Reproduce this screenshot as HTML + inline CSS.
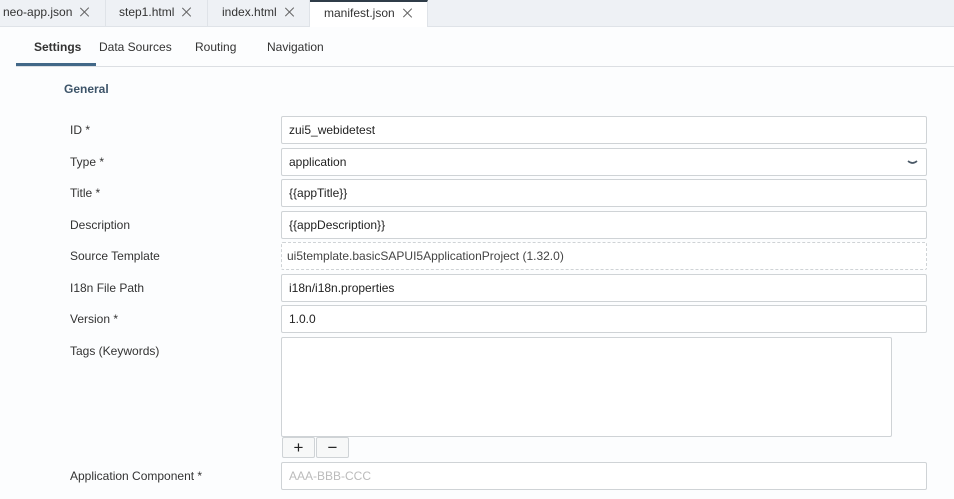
<!DOCTYPE html>
<html><head><meta charset="utf-8"><style>
*{box-sizing:border-box;margin:0;padding:0}
body{width:954px;height:499px;overflow:hidden;background:#fcfdfe;font-family:"Liberation Sans",Arial,sans-serif;font-size:12px;color:#333;position:relative}
.tabbar{position:absolute;left:0;top:0;width:954px;height:27px;background:#eef1f5;border-bottom:1px solid #dfe3e8}
.tab{position:absolute;top:0;height:26px;line-height:25px;color:#333;font-size:12px;border-right:1px solid #dfe3e8}
.tab .x{display:inline-block;width:10px;height:10px;position:relative;margin-left:8px;top:1px}
.x:before,.x:after{content:"";position:absolute;left:4px;top:-1px;width:1.3px;height:12px;background:#666;transform:rotate(45deg)}
.x:after{transform:rotate(-45deg)}
.tab.active{background:#fff;border-top:2px solid #2f3c48;height:27px;line-height:23px}
.sub{position:absolute;top:40px;font-size:12px;color:#333}
.line{position:absolute;left:16px;top:66px;width:938px;height:1px;background:#dcdfe3}
.ul{position:absolute;left:16px;top:63px;width:80px;height:3px;background:#426888}
.h{position:absolute;left:64px;top:82px;font-weight:bold;color:#3d5469;font-size:12px}
.lab{position:absolute;left:70px;font-size:12px;color:#333}
.in{position:absolute;left:281px;width:646px;height:28px;background:#fff;border:1px solid #cfd3d6;border-radius:2px;padding-left:7px;line-height:26px;font-size:12px;color:#222}
.btn{position:absolute;top:437px;width:33px;height:21px;background:#f7f8f8;border:1px solid #cfd3d6;border-radius:2px;text-align:center;line-height:19px;font-size:17px;color:#222}
</style></head><body>
<div class="tabbar">
<div class="tab" style="left:0;width:106px;padding-left:3px">neo-app.json<span class="x"></span></div>
<div class="tab" style="left:106px;width:102px;padding-left:13px">step1.html<span class="x"></span></div>
<div class="tab" style="left:208px;width:102px;padding-left:14px">index.html<span class="x"></span></div>
<div class="tab active" style="left:310px;width:118px;padding-left:14px">manifest.json<span class="x"></span></div>
</div>
<div class="sub" style="left:34px;font-weight:bold">Settings</div>
<div class="sub" style="left:99px">Data Sources</div>
<div class="sub" style="left:195px">Routing</div>
<div class="sub" style="left:267px">Navigation</div>
<div class="line"></div><div class="ul"></div>
<div class="h">General</div>

<div class="lab" style="top:123px">ID *</div>
<div class="in" style="top:116px">zui5_webidetest</div>
<div class="lab" style="top:155px">Type *</div>
<div class="in" style="top:148px">application<svg style="position:absolute;right:8px;top:11px" width="11" height="6" viewBox="0 0 11 6"><path d="M1 1 Q5.5 5 10 1" stroke="#4a5866" stroke-width="1.6" fill="none"/></svg></div>
<div class="lab" style="top:186px">Title *</div>
<div class="in" style="top:179px">{{appTitle}}</div>
<div class="lab" style="top:218px">Description</div>
<div class="in" style="top:211px">{{appDescription}}</div>
<div class="lab" style="top:249px">Source Template</div>
<div class="in" style="top:242px;border:1px dashed #cfd3d6;color:#444;padding-left:5px">ui5template.basicSAPUI5ApplicationProject (1.32.0)</div>
<div class="lab" style="top:281px">I18n File Path</div>
<div class="in" style="top:274px">i18n/i18n.properties</div>
<div class="lab" style="top:312px">Version *</div>
<div class="in" style="top:305px">1.0.0</div>
<div class="lab" style="top:344px">Tags (Keywords)</div>
<div class="in" style="top:337px;width:611px;height:100px"></div>
<div class="btn" style="left:282px">+</div>
<div class="btn" style="left:316px">−</div>
<div class="lab" style="top:469px">Application Component *</div>
<div class="in" style="top:462px;color:#bbb">AAA-BBB-CCC</div>
</body></html>
